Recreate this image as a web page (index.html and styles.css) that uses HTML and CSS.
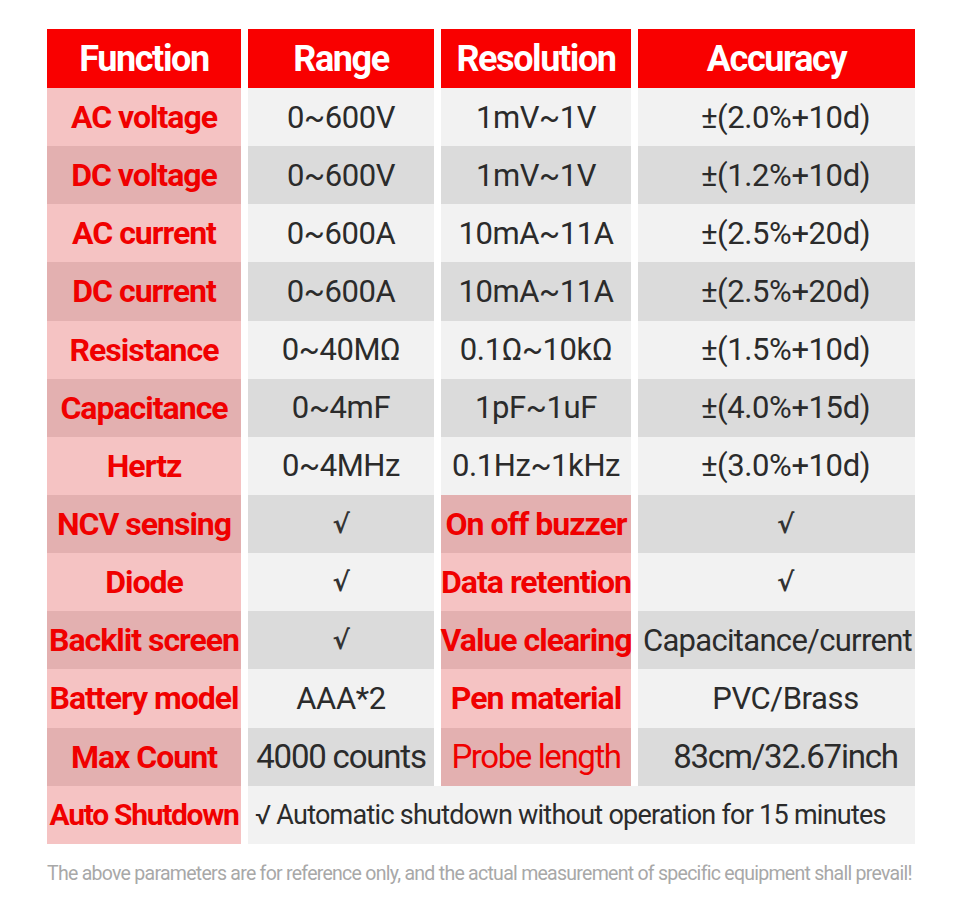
FILE: index.html
```html
<!DOCTYPE html>
<html>
<head>
<meta charset="utf-8">
<link rel="stylesheet" href="styles.css">
</head>
<body>
<div class="page">
  <div class="spec">
    <div class="hd">Function</div>
    <div class="hd">Range</div>
    <div class="hd">Resolution</div>
    <div class="hd">Accuracy</div>

    <div class="fn">AC voltage</div>
    <div class="val">0~600V</div>
    <div class="val">1mV~1V</div>
    <div class="val acc">±(2.0%+10d)</div>

    <div class="fn dk">DC voltage</div>
    <div class="val dk">0~600V</div>
    <div class="val dk">1mV~1V</div>
    <div class="val acc dk">±(1.2%+10d)</div>

    <div class="fn">AC current</div>
    <div class="val">0~600A</div>
    <div class="val">10mA~11A</div>
    <div class="val acc">±(2.5%+20d)</div>

    <div class="fn dk">DC current</div>
    <div class="val dk">0~600A</div>
    <div class="val dk">10mA~11A</div>
    <div class="val acc dk">±(2.5%+20d)</div>

    <div class="fn">Resistance</div>
    <div class="val">0~40MΩ</div>
    <div class="val">0.1Ω~10kΩ</div>
    <div class="val acc">±(1.5%+10d)</div>

    <div class="fn dk">Capacitance</div>
    <div class="val dk">0~4mF</div>
    <div class="val dk">1pF~1uF</div>
    <div class="val acc dk">±(4.0%+15d)</div>

    <div class="fn">Hertz</div>
    <div class="val">0~4MHz</div>
    <div class="val">0.1Hz~1kHz</div>
    <div class="val acc">±(3.0%+10d)</div>

    <div class="fn dk">NCV sensing</div>
    <div class="val dk chk">√</div>
    <div class="fn dk">On off buzzer</div>
    <div class="val acc dk chk">√</div>

    <div class="fn">Diode</div>
    <div class="val chk">√</div>
    <div class="fn">Data retention</div>
    <div class="val acc chk">√</div>

    <div class="fn dk">Backlit screen</div>
    <div class="val dk chk">√</div>
    <div class="fn dk">Value clearing</div>
    <div class="val dk tight">Capacitance/current</div>

    <div class="fn">Battery model</div>
    <div class="val">AAA*2</div>
    <div class="fn">Pen material</div>
    <div class="val acc">PVC/Brass</div>

    <div class="fn dk">Max Count</div>
    <div class="val dk big">4000 counts</div>
    <div class="fn dk thin">Probe length</div>
    <div class="val acc dk big">83cm/32.67inch</div>

    <div class="fn small">Auto Shutdown</div>
    <div class="val wide">√ Automatic shutdown without operation for 15 minutes</div>
  </div>
  <p class="note">The above parameters are for reference only, and the actual measurement of specific equipment shall prevail!</p>
</div>
</body>
</html>
```
FILE: styles.css
```css
html, body {
  margin: 0;
  padding: 0;
  background: #ffffff;
}

.page {
  padding: 29px 0 0 47px;
  font-family: Roboto, "Liberation Sans", sans-serif;
}

.spec {
  display: grid;
  width: 868px;
  grid-template-columns: 194px 186px 190px 277px;
  grid-template-rows: 59px repeat(13, 58.15px);
  column-gap: 7px;
}

.spec > div {
  display: flex;
  align-items: center;
  justify-content: center;
  white-space: nowrap;
  overflow: visible;
}

.hd {
  background: #f90000;
  color: #ffffff;
  font-weight: 700;
  font-size: 36px;
  letter-spacing: -1.4px;
}

.fn {
  background: #f5c3c3;
  color: #f00000;
  font-weight: 700;
  font-size: 32px;
  letter-spacing: -1px;
}

.fn.dk {
  background: #e3b0b0;
}

.fn.small {
  font-size: 30px;
  letter-spacing: -1.3px;
}

.fn.thin {
  font-weight: 400;
  font-size: 33px;
  letter-spacing: -1.4px;
}

.val {
  background: #f2f2f2;
  color: #2b2b2b;
  font-size: 31px;
  letter-spacing: -0.4px;
}

.val.dk {
  background: #dbdbdb;
}

.val.acc {
  padding-left: 18px;
}

.val.tight {
  letter-spacing: -0.7px;
  padding-left: 2px;
}

.val.big {
  font-size: 33px;
  letter-spacing: -1.2px;
}

.val.chk {
  font-family: "DejaVu Sans", sans-serif;
  font-size: 26px;
  font-weight: 700;
  color: #333333;
}

.spec > .val.wide {
  grid-column: 2 / 5;
  justify-content: flex-start;
  padding-left: 7px;
  font-size: 27px;
  letter-spacing: -0.75px;
}

.note {
  margin: 18px 0 0 0;
  font-size: 19.5px;
  line-height: 24px;
  color: #a8a8a8;
  letter-spacing: -0.73px;
  white-space: nowrap;
}
```
